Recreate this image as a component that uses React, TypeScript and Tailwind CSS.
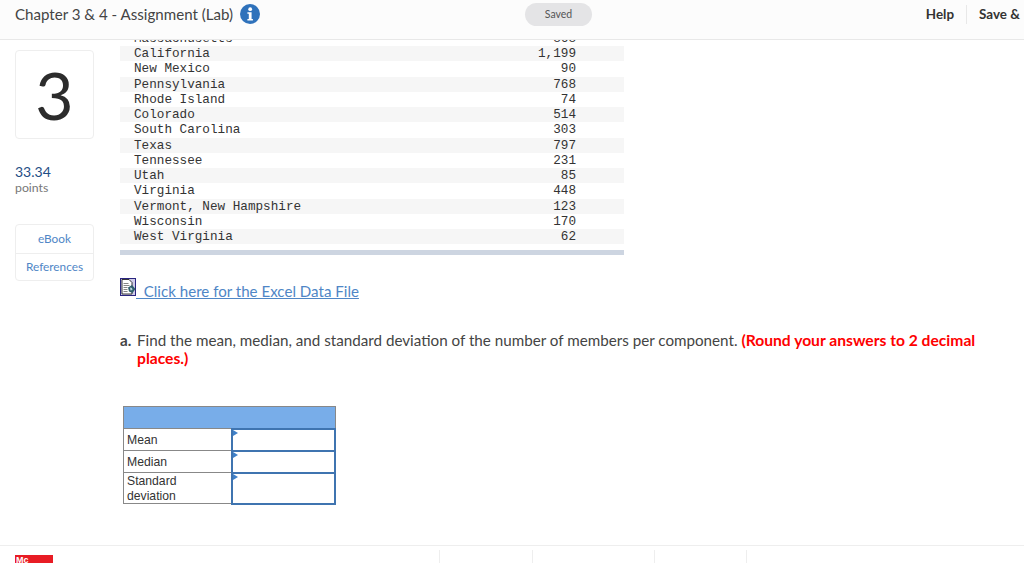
const rows: [string, string][] = [
  ["Massachusetts", "868"],
  ["California", "1,199"],
  ["New Mexico", "90"],
  ["Pennsylvania", "768"],
  ["Rhode Island", "74"],
  ["Colorado", "514"],
  ["South Carolina", "303"],
  ["Texas", "797"],
  ["Tennessee", "231"],
  ["Utah", "85"],
  ["Virginia", "448"],
  ["Vermont, New Hampshire", "123"],
  ["Wisconsin", "170"],
  ["West Virginia", "62"],
];

function InfoIcon() {
  return (
    <svg width="20" height="20" viewBox="0 0 20 20" className="ml-[7px] shrink-0">
      <circle cx="10" cy="10" r="10" fill="#2f72bb" />
      <circle cx="10.2" cy="5.2" r="1.9" fill="#fff" />
      <path d="M7.4 8.2h4.2v6.8h1.3v1.6H7.4V15h1.4v-5.2H7.4z" fill="#fff" />
    </svg>
  );
}

function FileIcon() {
  return (
    <svg width="16" height="18" viewBox="0 0 16 18" className="shrink-0">
      <rect x="0" y="0" width="16" height="18" fill="#2a2580" />
      <rect x="1" y="1" width="14" height="16" fill="#cfcce8" />
      <path d="M2 1.5h7l3 3V16H2z" fill="#fff" stroke="#222" strokeWidth="0.9" />
      <path d="M3.5 5.5h5M3.5 7.5h6M3.5 9.5h4M3.5 11.5h4M3.5 13.5h4" stroke="#666" strokeWidth="0.8" />
      <path d="M8 9.5l4-2.5 3.5 4-3 4-3.5-1.5z" fill="#2f5f6c" />
      <path d="M10 9.5l2 .5.5 2-2 .5z" fill="#b9d3d8" />
    </svg>
  );
}

export default function App() {
  return (
    <div className="h-[563px] w-[1024px] overflow-hidden bg-white flex flex-col font-['Lato','Liberation_Sans',sans-serif] text-[#333]">
      <header className="h-10 shrink-0 bg-[#fcfcfc] border-b border-[#e8e8e8] flex items-start relative">
        <div className="flex items-center pl-[15px] pt-[4px] w-[525px] shrink-0">
          <span className="text-[15.1px] leading-5 text-[#444]">Chapter 3 &amp; 4 - Assignment (Lab)</span>
          <InfoIcon />
        </div>
        <div className="mt-[3px] w-[67px] h-[23px] rounded-full bg-[#e4e4e6] flex items-center justify-center text-[10.5px] text-[#555] shrink-0">
          Saved
        </div>
        <div className="ml-auto flex items-center mt-[5px] h-[19px] text-[13.4px] font-bold text-[#333] whitespace-nowrap">
          <span className="pr-3">Help</span>
          <span className="border-l border-[#e8e8e8] h-[19px] flex items-center pl-3 w-[58px]">Save &amp;</span>
        </div>
      </header>

      <div className="flex flex-1 min-h-0 overflow-hidden">
        <aside className="w-[120px] shrink-0 pl-[15px] pt-[10px]">
          <div className="w-[79px] h-[89px] rounded border border-[#eeeeee] flex items-center justify-center text-[66px] leading-none text-[#2c2c2c]">
            3
          </div>
          <div className="mt-[24px] text-[14px] leading-[18px] text-[#1f4e85]">33.34</div>
          <div className="text-[12.3px] leading-[15px] text-[#777] -mt-[1px]">points</div>
          <div className="mt-[29px] w-[79px] h-[57px] rounded border border-[#eeeeee] flex flex-col text-[11.8px] text-[#4f86c6]">
            <div className="h-[29px] border-b border-[#eeeeee] flex items-center justify-center">eBook</div>
            <div className="flex-1 flex items-center justify-center">References</div>
          </div>
        </aside>

        <main className="flex-1 min-w-0 overflow-hidden">
          <div className="-mt-[9.2px] w-[504px] font-['Liberation_Mono',monospace] text-[12.67px] leading-[15.25px] text-[#333]">
            {rows.map(([name, value], i) => (
              <div key={name} className={`flex h-[15.25px] pl-[14px] pr-[48px] justify-between whitespace-pre ${i % 2 === 1 ? "bg-[#f6f6f6]" : ""}`}>
                <span>{name}</span>
                <span>{value}</span>
              </div>
            ))}
            <div className="h-[5px] mt-[6.1px] bg-[#cdd5e1]" />
          </div>

          <div className="mt-[22.6px] flex items-start h-[19px]">
            <FileIcon />
            <a className="text-[15.1px] leading-5 mt-[3px] text-[#4f86c6] underline whitespace-pre">  Click here for the Excel Data File</a>
          </div>

          <div className="mt-[35px] w-[870px] flex text-[15.2px] leading-[17.5px] text-[#444]">
            <span className="w-[17px] shrink-0 font-bold">a.</span>
            <div>
              Find the mean, median, and standard deviation of the number of members per component.{" "}
              <span className="font-bold text-[15.65px] text-[#fe0000]">(Round your answers to 2 decimal places.)</span>
            </div>
          </div>

          <table className="mt-[39px] ml-[3px] w-[213px] border-collapse table-fixed font-['Liberation_Sans',sans-serif] text-[12.2px] leading-[15px] text-[#333]">
            <colgroup>
              <col className="w-[108px]" />
              <col />
            </colgroup>
            <tbody>
              <tr className="h-[22px] bg-[#78ade9]">
                <td colSpan={2} className="border border-[#888]" />
              </tr>
              {[
                ["Mean", "h-[22px]"],
                ["Median", "h-[22px]"],
                ["Standard deviation", "h-[30px]"],
              ].map(([label, h]) => (
                <tr key={label} className={h}>
                  <td className="border border-[#888] px-[3px] py-0 align-middle">
                    <span className="block relative top-px">{label}</span>
                  </td>
                  <td className="relative border-2 border-[#3f74b0] p-0">
                    <span className="absolute left-0 top-0 border-y-[3.5px] border-l-[5px] border-y-transparent border-l-[#3f80c8]" />
                  </td>
                </tr>
              ))}
            </tbody>
          </table>
        </main>
      </div>

      <footer className="h-[18px] shrink-0 border-t border-[#eeeeee] flex items-end relative overflow-hidden">
        <div className="ml-[15px] w-[38px] h-[8px] bg-[#e81c24] pl-[1px] text-[9px] leading-[10px] font-bold text-white overflow-hidden font-['Liberation_Sans',sans-serif]">Mc</div>
        <div className="flex ml-[386px] h-[13px]">
          <div className="w-[93px] border-l border-[#eeeeee]" />
          <div className="w-[122px] border-l border-[#eeeeee]" />
          <div className="w-[92px] border-l border-[#eeeeee]" />
          <div className="w-[92px] border-l border-[#eeeeee]" />
        </div>
      </footer>
    </div>
  );
}
